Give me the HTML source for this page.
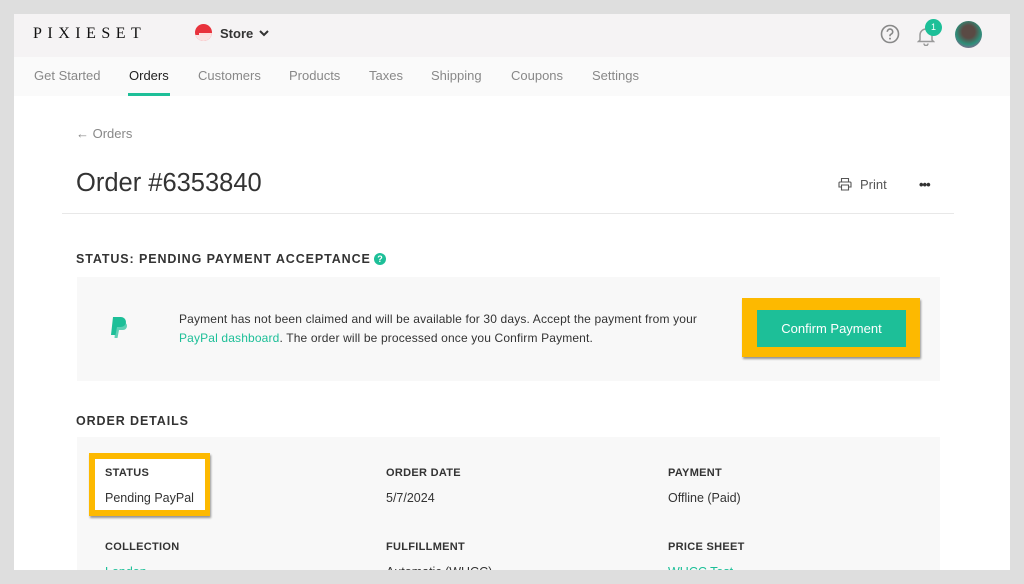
<!DOCTYPE html>
<html><head><meta charset="utf-8"><style>
*{margin:0;padding:0;box-sizing:border-box}
body{width:1024px;height:584px;background:#dedede;font-family:"Liberation Sans",sans-serif;position:relative;overflow:hidden;color:#333}
.card{position:absolute;left:14px;top:14px;width:996px;height:556px;background:#fff;overflow:hidden}
.hdr{position:absolute;left:0;top:0;width:996px;height:43px;background:#f5f3f4}
.nav{position:absolute;left:0;top:43px;width:996px;height:39px;background:#fafafa}
.abs{position:absolute;white-space:nowrap}
.nav span{position:absolute;top:11px;font-size:13px;color:#888}
.lbl{font-size:11px;font-weight:bold;color:#333;letter-spacing:.3px}
.val{font-size:12.5px;color:#333}
</style></head><body>
<div class="card">
 <div class="hdr">
  <div class="abs" style="left:19px;top:11px;font-family:'Liberation Serif',serif;font-size:16px;letter-spacing:5.5px;color:#111">PIXIESET</div>
  <div class="abs" style="left:181px;top:10px;width:17px;height:17px;border-radius:50%;background:#e8323c;overflow:hidden"><div style="position:absolute;left:4px;top:9px;width:13px;height:2px;background:#fdd"></div><div style="position:absolute;left:0;top:11px;width:17px;height:6px;background:#fbe3e3"></div></div>
  <div class="abs" style="left:206px;top:12px;font-size:13px;font-weight:bold;color:#333">Store</div>
  <svg class="abs" style="left:245px;top:16px" width="10" height="7" viewBox="0 0 10 7"><path d="M1 1l4 4 4-4" stroke="#333" stroke-width="2" fill="none"/></svg>
  <svg class="abs" style="left:866px;top:10px" width="20" height="20" viewBox="0 0 20 20"><circle cx="10" cy="10" r="8.5" stroke="#888" stroke-width="1.6" fill="none"/><path d="M7.3 7.8a2.7 2.7 0 1 1 3.6 2.5c-.7.3-.9.8-.9 1.5v.5" stroke="#888" stroke-width="1.6" fill="none"/><circle cx="10" cy="14.6" r="1" fill="#888"/></svg>
  <svg class="abs" style="left:903px;top:12px" width="18" height="20" viewBox="0 0 18 20"><path d="M3 14V9a6 6 0 0 1 12 0v5l1.5 1.5h-15z" stroke="#999" stroke-width="1.5" fill="none"/><path d="M7 17.5a2 2 0 0 0 4 0" stroke="#999" stroke-width="1.5" fill="none"/></svg>
  <div class="abs" style="left:911px;top:5px;width:17px;height:17px;border-radius:50%;background:#1dbf98;color:#fff;font-size:9px;text-align:center;line-height:17px">1</div>
  <div class="abs" style="left:941px;top:7px;width:27px;height:27px;border-radius:50%;background:radial-gradient(circle at 50% 40%,#5a4a44 30%,#2d8f7a 60%,#b05a9a 90%)"></div>
 </div>
 <div class="nav">
  <span style="left:20px">Get Started</span>
  <span style="left:115px;color:#222">Orders</span>
  <div class="abs" style="left:114px;top:36px;width:42px;height:3px;background:#1dbf98"></div>
  <span style="left:184px">Customers</span>
  <span style="left:275px">Products</span>
  <span style="left:355px">Taxes</span>
  <span style="left:417px">Shipping</span>
  <span style="left:497px">Coupons</span>
  <span style="left:578px">Settings</span>
 </div>
 <div class="abs" style="left:62px;top:112px;font-size:13px;color:#888">&#8592; Orders</div>
 <div class="abs" style="left:62px;top:155px;font-size:25.5px;color:#333">Order #6353840</div>
 <svg class="abs" style="left:824px;top:163px" width="14" height="14" viewBox="0 0 14 14"><path d="M3.5 5V1.5h7V5M2 5h10a1 1 0 0 1 1 1v4h-2.5M3.5 10H1V6a1 1 0 0 1 1-1M3.5 8h7v5h-7z" stroke="#555" stroke-width="1.1" fill="none"/></svg>
 <div class="abs" style="left:846px;top:163px;font-size:13px;color:#555">Print</div>
 <div class="abs" style="left:905px;top:163px;font-size:13px;color:#333;font-weight:bold;letter-spacing:-1px">•••</div>
 <div class="abs" style="left:48px;top:199px;width:892px;height:1px;background:#e8e8e8"></div>
 <div class="abs lbl" style="left:62px;top:238px;font-size:12.5px;letter-spacing:.9px">STATUS: PENDING PAYMENT ACCEPTANCE</div>
 <div class="abs" style="left:360px;top:239px;width:12px;height:12px;border-radius:50%;background:#1dbf98;color:#fff;font-size:9px;font-weight:bold;text-align:center;line-height:12px">?</div>
 <div class="abs" style="left:63px;top:263px;width:863px;height:104px;background:#f8f8f8"></div>
 <svg class="abs" style="left:96px;top:302px" width="18" height="24" viewBox="0 0 18 24"><path d="M3 1h8a5 5 0 0 1 0 10H7l-1.5 8H1z" fill="#1dbf98"/><path d="M6 6h7a4 4 0 0 1 0 8H9l-1.5 8H4.5" fill="#1dbf98" opacity=".7"/></svg>
 <div class="abs" style="left:165px;top:296px;font-size:12px;line-height:19px;color:#333;letter-spacing:.15px">Payment has not been claimed and will be available for 30 days. Accept the payment from your<br><span style="color:#1dbf98">PayPal dashboard</span>. The order will be processed once you Confirm Payment.</div>
 <div class="abs" style="left:728px;top:284px;width:178px;height:59px;background:#fdb900;box-shadow:1px 2px 2px rgba(0,0,0,.4)"></div>
 <div class="abs" style="left:743px;top:296px;width:149px;height:37px;background:#1dbf98;color:#fff;font-size:13px;text-align:center;line-height:37px">Confirm Payment</div>
 <div class="abs lbl" style="left:62px;top:400px;font-size:12.5px;letter-spacing:.9px">ORDER DETAILS</div>
 <div class="abs" style="left:63px;top:423px;width:863px;height:140px;background:#f8f8f8"></div>
 <div class="abs" style="left:75px;top:439px;width:121px;height:63px;background:#fdb900;box-shadow:1px 2px 2px rgba(0,0,0,.4)"></div>
 <div class="abs" style="left:81px;top:445px;width:110px;height:51px;background:#fff"></div>
 <div class="abs lbl" style="left:91px;top:453px">STATUS</div>
 <div class="abs val" style="left:91px;top:477px">Pending PayPal</div>
 <div class="abs lbl" style="left:372px;top:453px">ORDER DATE</div>
 <div class="abs val" style="left:372px;top:477px">5/7/2024</div>
 <div class="abs lbl" style="left:654px;top:453px">PAYMENT</div>
 <div class="abs val" style="left:654px;top:477px">Offline (Paid)</div>
 <div class="abs lbl" style="left:91px;top:527px">COLLECTION</div>
 <div class="abs lbl" style="left:372px;top:527px">FULFILLMENT</div>
 <div class="abs lbl" style="left:654px;top:527px">PRICE SHEET</div>
 <div class="abs val" style="left:91px;top:551px;color:#1dbf98">London</div>
 <div class="abs val" style="left:372px;top:551px">Automatic (WHCC)</div>
 <div class="abs val" style="left:654px;top:551px;color:#1dbf98">WHCC Test</div>
</div>
</body></html>
